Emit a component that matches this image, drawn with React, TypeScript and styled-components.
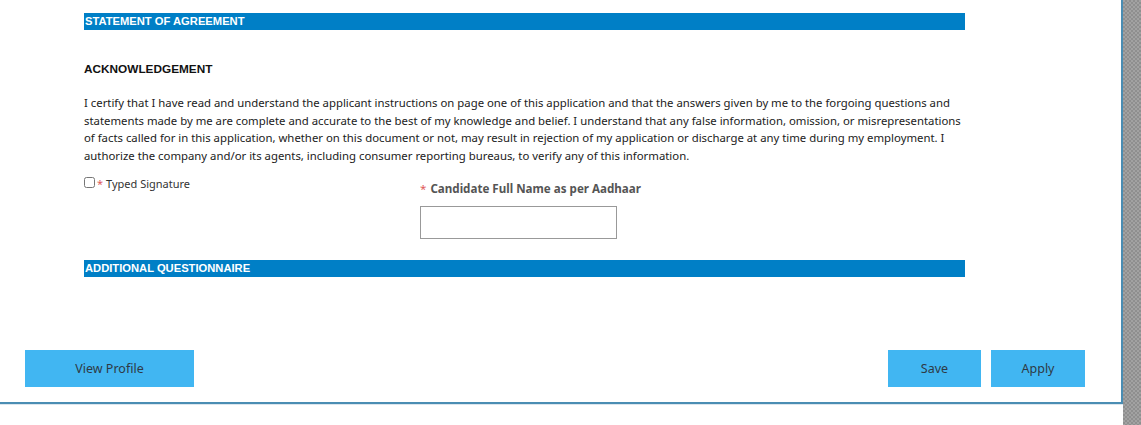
import styled, { createGlobalStyle } from "styled-components";

const GlobalStyle = createGlobalStyle`
  html, body {
    margin: 0;
    padding: 0;
    background: #ffffff;
  }
  * {
    box-sizing: border-box;
  }
`;

const Page = styled.div`
  display: flex;
  min-height: 425px;
  width: 1141px;
  overflow: hidden;
`;

const Panel = styled.div`
  width: 1123px;
  height: 404px;
  display: flex;
  flex-direction: column;
  background: #ffffff;
  border-right: 2px solid #4a8db3;
  border-bottom: 2px solid #4a8db3;
  box-shadow: 0 1px 0 #dbe6ee;
  padding-top: 13px;
`;

const Backdrop = styled.div`
  flex: 1;
  background-color: #9a9a9a;
  background-image: repeating-conic-gradient(#8f8f8f 0% 25%, #a2a2a2 0% 50%);
  background-size: 4px 4px;
`;

const Section = styled.div`
  width: 881px;
  margin-left: 84px;
`;

const SectionBar = styled.div`
  height: 17px;
  background: #007fc6;
  color: #ffffff;
  font-family: "Liberation Sans", Arial, sans-serif;
  font-weight: bold;
  font-size: 11.2px;
  line-height: 17px;
  padding-left: 1px;
`;

const SubHeading = styled.div`
  margin-top: 33px;
  font-family: "Liberation Sans", Arial, sans-serif;
  font-weight: bold;
  font-size: 11.8px;
  line-height: 13px;
  color: #111111;
`;

const Paragraph = styled.p`
  margin: 18px 0 0;
  font-family: "Noto Sans", "Open Sans", sans-serif;
  font-size: 11.35px;
  line-height: 17.7px;
  color: #222222;
`;

const SignatureRow = styled.div`
  display: flex;
  margin-top: 11px;
  height: 82px;
`;

const CheckLabel = styled.label`
  width: 336px;
  display: flex;
  align-items: flex-start;
  gap: 2px;
  font-family: "Noto Sans", "Open Sans", sans-serif;
  font-size: 11px;
  line-height: 16px;
  color: #333333;
`;

const Check = styled.input`
  width: 11px;
  height: 11px;
  margin: 1px 0 0;
`;

const Required = styled.span<{ $gap?: number }>`
  color: #e05a5a;
  font-weight: normal;
  margin-right: ${({ $gap }) => $gap ?? 4}px;
`;

const Field = styled.div`
  display: flex;
  flex-direction: column;
  padding-top: 5px;
`;

const FieldLabel = styled.div`
  font-family: "Noto Sans", "Open Sans", sans-serif;
  font-weight: bold;
  font-size: 11.6px;
  line-height: 16px;
  color: #555555;
`;

const TextInput = styled.input`
  margin-top: 9px;
  width: 197px;
  height: 33px;
  border: 1px solid #999999;
  border-radius: 0;
  outline: none;
`;

const LowerBar = styled(SectionBar)`
  margin-top: 2px;
`;

const Footer = styled.div`
  margin-top: 73px;
  display: flex;
  justify-content: space-between;
  padding: 0 36px 0 25px;
`;

const ButtonGroup = styled.div`
  display: flex;
  gap: 10px;
`;

const ActionButton = styled.button<{ $width: number }>`
  width: ${({ $width }) => $width}px;
  height: 37px;
  border: none;
  border-radius: 0;
  background: #41b6f2;
  color: #2f3a45;
  font-family: "Noto Sans", "Open Sans", sans-serif;
  font-size: 12.5px;
  cursor: pointer;
`;

export default function App() {
  return (
    <>
      <GlobalStyle />
      <Page>
        <Panel>
          <Section>
            <SectionBar>STATEMENT OF AGREEMENT</SectionBar>
            <SubHeading>ACKNOWLEDGEMENT</SubHeading>
            <Paragraph>
              I certify that I have read and understand the applicant instructions on page one of this
              application and that the answers given by me to the forgoing questions and statements made
              by me are complete and accurate to the best of my knowledge and belief. I understand that
              any false information, omission, or misrepresentations of facts called for in this
              application, whether on this document or not, may result in rejection of my application or
              discharge at any time during my employment. I authorize the company and/or its agents,
              including consumer reporting bureaus, to verify any of this information.
            </Paragraph>
            <SignatureRow>
              <CheckLabel>
                <Check type="checkbox" />
                <span>
                  <Required $gap={3}>*</Required>Typed Signature
                </span>
              </CheckLabel>
              <Field>
                <FieldLabel>
                  <Required>*</Required>Candidate Full Name as per Aadhaar
                </FieldLabel>
                <TextInput type="text" />
              </Field>
            </SignatureRow>
            <LowerBar>ADDITIONAL QUESTIONNAIRE</LowerBar>
          </Section>
          <Footer>
            <ActionButton $width={169}>View Profile</ActionButton>
            <ButtonGroup>
              <ActionButton $width={93}>Save</ActionButton>
              <ActionButton $width={94}>Apply</ActionButton>
            </ButtonGroup>
          </Footer>
        </Panel>
        <Backdrop />
      </Page>
    </>
  );
}
